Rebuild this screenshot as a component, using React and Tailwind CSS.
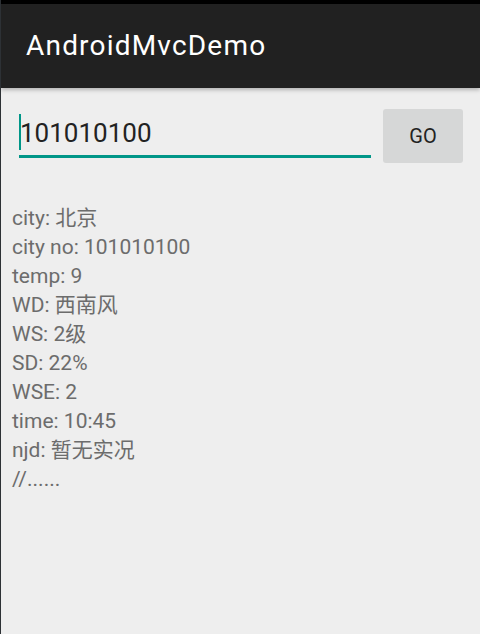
import React from 'react';

const lines = [
  'city: 北京',
  'city no: 101010100',
  'temp: 9',
  'WD: 西南风',
  'WS: 2级',
  'SD: 22%',
  'WSE: 2',
  'time: 10:45',
  'njd: 暂无实况',
  '//......',
];

const font = { fontFamily: 'Roboto, "Noto Sans CJK SC", sans-serif' };

export default function App() {
  return (
    <div className="w-[480px] h-[634px] bg-[#eeeeee] flex flex-col border-l border-[#2d3135] overflow-hidden" style={font}>
      <div className="h-[4px] bg-black shrink-0" />
      <header className="h-[84px] shrink-0 bg-[#212121] flex items-center pl-[25px] shadow-[0_2px_4px_rgba(0,0,0,0.25)] relative z-10">
        <h1 className="text-[28px] tracking-[1.2px] text-white leading-none">AndroidMvcDemo</h1>
      </header>

      <div className="flex items-start pt-[21px] pl-[18px] pr-[17px] gap-[12px]">
        <div className="flex-1 h-[49px] flex items-center border-b-[3px] border-[#009688]">
          <span className="w-[2px] h-[36px] bg-[#009688] shrink-0" />
          <span className="text-[26px] leading-[36px] text-[#222222] -ml-[1px] pt-[2px]">101010100</span>
        </div>
        <button className="w-[80px] h-[54px] rounded-[3px] bg-[#d6d7d7] text-[20px] text-[#222222] flex items-center justify-center">
          GO
        </button>
      </div>

      <div className="mt-[41px] pl-[11px] flex flex-col">
        {lines.map((line, i) => (
          <p key={i} className="text-[21px] leading-[29px] text-[#6c6c6c]">{line}</p>
        ))}
      </div>
    </div>
  );
}
